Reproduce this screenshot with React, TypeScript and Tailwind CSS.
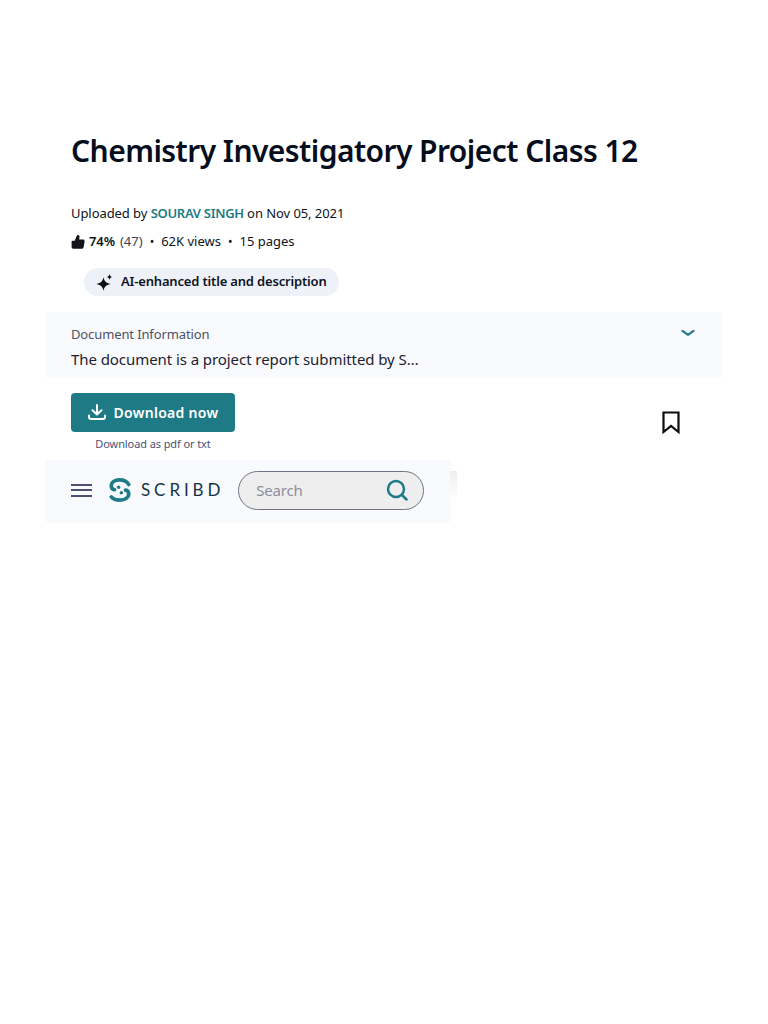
function ThumbIcon() {
  return (
    <svg viewBox="0 0 14 14" className="size-[14px] shrink-0" fill="#111318" aria-hidden="true">
      <path d="M.6 6.600c0-.5.4-.9.900-.9h2.200l2-4.600C6 .3 6.600-.1 7.300.1c.9.3 1.300 1 1.200 1.900L8.200 4.600h3.900c1 0 1.700.9 1.500 1.900l-1 5.700c-.2.900-.9 1.500-1.800 1.500H2.300c-.9 0-1.700-.8-1.700-1.700z" />
    </svg>
  );
}

function SparkleIcon() {
  return (
    <svg viewBox="0 0 17 17" className="size-[17px] shrink-0" fill="#0d1017" aria-hidden="true">
      <path d="M7.500 3c.7 4 2.500 6 7 7-4.500 1-6.300 3-7 7-.7-4-2.500-6-7-7 4.500-1 6.300-3 7-7z" />
      <path d="M13.500 0c.3 1.800 1.200 2.700 3 3-1.800.3-2.700 1.200-3 3-.3-1.800-1.200-2.700-3-3 1.800-.3 2.700-1.200 3-3z" />
    </svg>
  );
}

function ScribdLogo() {
  return (
    <svg viewBox="0 0 24 26" className="h-[24px] w-[22px] shrink-0" fill="none" stroke="#1e7b85" strokeLinecap="round" aria-hidden="true">
      <path d="M21.500 7C19.500 3.200 15.500 2 11.500 2 6.500 2 2.500 4.500 2.500 8.500c0 2.200 1.400 3.800 3.500 4.200" strokeWidth="4" />
      <path d="M2.500 20.500C4.500 23 8 24 12 24c5.500 0 9.500-2.800 9.500-6.800 0-2.200-1.400-3.800-3.500-4.100" strokeWidth="4" />
      <circle cx="10.500" cy="10" r="1.900" fill="#1e7b85" stroke="none" />
      <circle cx="13.500" cy="16" r="1.900" fill="#1e7b85" stroke="none" />
    </svg>
  );
}

export default function App() {
  return (
    <div className="min-h-[1024px] bg-white pt-[129px] font-['Noto_Sans',sans-serif] text-[#0d1422]">
      <div className="px-[71px]">
        <h1 className="text-[30px] leading-[44px] font-semibold tracking-[-0.55px] text-[#060d1c]">
          Chemistry Investigatory Project Class 12
        </h1>
        <p className="mt-[30px] text-[13px] leading-[20px] tracking-[-0.07px]">
          Uploaded by <span className="font-semibold tracking-[-0.3px] text-[#1e7b85]">SOURAV SINGH</span> on Nov 05, 2021
        </p>
        <div className="mt-[9px] flex h-5 items-center text-[13px]">
          <ThumbIcon />
          <span className="ml-1 font-semibold tracking-[-0.1px]">74%</span>
          <span className="ml-[5px] text-[#3d4250]">(47)</span>
          <span className="mx-[7px] text-[12px]">•</span>
          <span>62K views</span>
          <span className="mx-[7px] text-[12px]">•</span>
          <span>15 pages</span>
        </div>
        <div className="mt-4 ml-[13px] inline-flex h-7 items-center gap-2 rounded-full bg-[#eff1f8] pr-3 pl-3">
          <SparkleIcon />
          <span className="text-[13px] font-semibold tracking-[-0.17px]">AI-enhanced title and description</span>
        </div>
      </div>

      <div className="relative mx-[46px] mt-[15px] h-[66px] bg-[#f9fafe] px-[25px] pt-[13px]">
        <p className="text-[13px] leading-[18px] tracking-[-0.12px] text-[#4c5263]">Document Information</p>
        <p className="mt-[6px] text-[15px] leading-[20px] tracking-[-0.07px] text-[#1c2230]">
          The document is a project report submitted by S…
        </p>
        <svg viewBox="0 0 14 8" className="absolute top-[17px] right-[27px] h-[8px] w-[14px]" fill="none" stroke="#1e7b85" strokeWidth="2.100" strokeLinecap="round" strokeLinejoin="round" aria-hidden="true">
          <path d="M1.500 1.800 7 5.800l5.500-4" />
        </svg>
      </div>

      <div className="mt-[15px] flex items-start justify-between pr-[88px] pl-[71px]">
        <div className="flex flex-col items-center">
          <button className="flex h-[39px] w-[164px] items-center justify-center gap-2 rounded bg-[#1e7b85] text-[14px] font-semibold tracking-[0.3px] text-white">
            <svg viewBox="0 0 18 16" className="h-4 w-[18px]" fill="none" stroke="currentColor" strokeWidth="2" strokeLinecap="round" strokeLinejoin="round" aria-hidden="true">
              <path d="M9 1v9M4.500 6.200 9 10.500l4.500-4.300M1 11.500v1.500a2 2 0 0 0 2 2h12a2 2 0 0 0 2-2v-1.500" />
            </svg>
            Download now
          </button>
          <p className="mt-[4px] text-[11px] leading-[16px] tracking-[-0.1px] text-[#4c5273]">Download as pdf or txt</p>
        </div>
        <svg viewBox="0 0 18 23" className="mt-[18px] h-[23px] w-[18px]" fill="none" stroke="#0d0d0d" strokeWidth="2.200" aria-hidden="true">
          <path d="M1.500 1.500h15v19.500L9 15l-7.500 6z" />
        </svg>
      </div>

      <div className="flex items-start">
        <div className="mt-[8px] ml-[46px] flex h-[61px] w-[404px] items-center bg-[#f9fafe] pl-[25px] shadow-[0_1px_3px_rgba(0,0,0,0.03)]">
          <div className="flex w-[21px] flex-col gap-[3.5px]">
            <span className="h-[2px] bg-[#4c5273]" />
            <span className="h-[2px] bg-[#4c5273]" />
            <span className="h-[2px] bg-[#4c5273]" />
          </div>
          <div className="ml-[17px]">
            <ScribdLogo />
          </div>
          <span className="ml-[10px] font-['Lato',sans-serif] text-[17px] tracking-[3.9px] text-[#12344a]">SCRIBD</span>
          <div className="ml-[14px] flex h-[39px] w-[186px] items-center justify-between rounded-full border border-[#6f7585] bg-[#eeeeee] pr-[15px] pl-[17px]">
            <span className="text-[15px] tracking-[-0.2px] text-[#8a8f9c]">Search</span>
            <svg viewBox="0 0 22 22" className="size-[22px]" fill="none" stroke="#1e7b85" strokeWidth="2.500" strokeLinecap="round" aria-hidden="true">
              <circle cx="10" cy="10" r="8" />
              <path d="M16 16l4.500 4.500" />
            </svg>
          </div>
        </div>
        <div className="mt-[19px] h-[30px] w-[7px] bg-gradient-to-b from-[#eeeeee] to-white" />
      </div>
    </div>
  );
}
